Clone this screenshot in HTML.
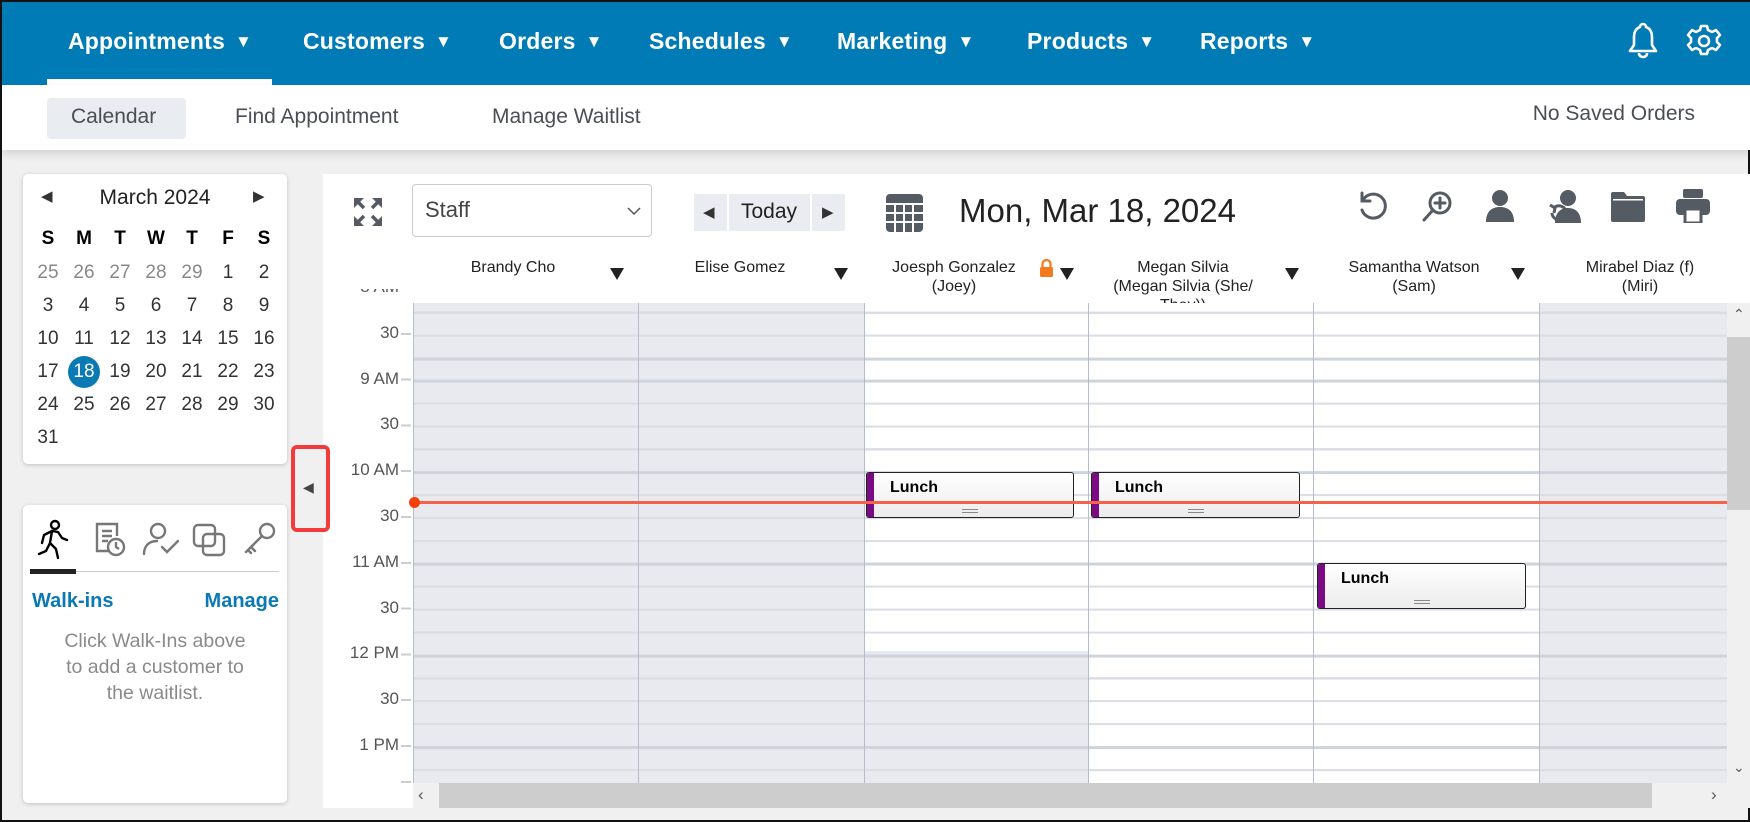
<!DOCTYPE html>
<html><head><meta charset="utf-8">
<style>
*{box-sizing:border-box;margin:0;padding:0}
body{width:1750px;height:822px;overflow:hidden;background:#f0f0f0;font-family:"Liberation Sans",Arial,sans-serif;position:relative;border:2px solid #111}
.a{position:absolute}
.nav{left:0;top:0;width:1750px;height:83px;background:#007bb5}
.ni{position:absolute;top:26px;color:#fff;font-size:23px;font-weight:bold;white-space:nowrap;letter-spacing:0.2px}
.ni span{font-size:17px;margin-left:10px;position:relative;top:-2px}
.sub{left:0;top:83px;width:1750px;height:65px;background:#fff;box-shadow:0 4px 8px rgba(0,0,0,.12)}
.st{position:absolute;top:20px;font-size:21px;color:#4a4e55;white-space:nowrap}
.card{background:#fff;border-radius:5px;box-shadow:0 1px 4px rgba(0,0,0,.2)}
.cal td{width:36px;height:33px;text-align:center;font-size:19px;color:#333}
.cal th{width:36px;height:34px;text-align:center;font-size:19px;color:#000;font-weight:bold}
.cal .g{color:#888}
.cal td.sel span{display:inline-block;width:32px;height:32px;border-radius:50%;background:#0a7ab5;color:#fff;line-height:32px}
.hdr{position:absolute;top:256px;font-size:16px;color:#222;text-align:center;line-height:19px;width:220px}
.tri{position:absolute;top:266px;width:0;height:0;border-left:7px solid transparent;border-right:7px solid transparent;border-top:12px solid #222}
.tl{position:absolute;font-size:17px;color:#555;text-align:right;width:76px}
.lunch{position:absolute;height:46px;border:1px solid #222;border-radius:3px;background:linear-gradient(#fff,#ececec);overflow:hidden}
.lunch:before{content:"";position:absolute;left:0;top:0;bottom:0;width:7px;background:#7b0a85}
.lunch b{position:absolute;left:23px;top:6px;font-size:16px;color:#000}
.lunch i{position:absolute;left:50%;bottom:4px;width:16px;margin-left:-8px;height:4px;border-top:1px solid #888;border-bottom:1px solid #888}
</style></head><body>
<div class="a nav">
<div class="ni" style="left:66px">Appointments<span>▼</span></div>
<div class="ni" style="left:301px">Customers<span>▼</span></div>
<div class="ni" style="left:497px">Orders<span>▼</span></div>
<div class="ni" style="left:647px">Schedules<span>▼</span></div>
<div class="ni" style="left:835px">Marketing<span>▼</span></div>
<div class="ni" style="left:1025px">Products<span>▼</span></div>
<div class="ni" style="left:1198px">Reports<span>▼</span></div>
<div class="a" style="left:45px;top:77px;width:225px;height:6px;background:#fff"></div>
<svg class="a" style="left:1624px;top:19px" width="34" height="40" viewBox="0 0 34 40" fill="none" stroke="#fff" stroke-width="2.6" stroke-linejoin="round"><path d="M17 3c-2 0-3 1.5-3 3C9 8 8 12 8 17v7l-4 6h26l-4-6v-7c0-5-1-9-6-11 0-1.5-1-3-3-3z"/><path d="M13 32c0 3 2 4 4 4s4-1 4-4"/></svg>
<svg class="a" style="left:1684px;top:21px" width="36" height="36" viewBox="0 0 36 36" fill="none" stroke="#fff" stroke-width="2.6" stroke-linejoin="round"><path d="M15 3h6l1 4 4 2 4-2 4 5-3 3v4l3 3-4 5-4-2-4 2-1 4h-6l-1-4-4-2-4 2-4-5 3-3v-4l-3-3 4-5 4 2 4-2z"/><circle cx="18" cy="18" r="5"/></svg>
</div>
<div class="a sub">
<div class="a" style="left:45px;top:13px;width:139px;height:41px;background:#e9ecf0;border-radius:4px"></div>
<div class="st" style="left:69px">Calendar</div>
<div class="st" style="left:233px">Find Appointment</div>
<div class="st" style="left:490px">Manage Waitlist</div>
<div class="st" style="right:57px;top:17px">No Saved Orders</div>
</div>

<div class="a card" style="left:21px;top:172px;width:264px;height:290px">
<div class="a" style="left:18px;top:13px;font-size:15px;color:#333">◀</div>
<div class="a" style="left:0;width:264px;top:12px;text-align:center;font-size:21px;color:#222">March 2024</div>
<div class="a" style="left:230px;top:13px;font-size:15px;color:#333">▶</div>
<table class="a cal" style="left:7px;top:48px;border-collapse:collapse">
<tr><th>S</th><th>M</th><th>T</th><th>W</th><th>T</th><th>F</th><th>S</th></tr>
<tr><td class="g">25</td><td class="g">26</td><td class="g">27</td><td class="g">28</td><td class="g">29</td><td>1</td><td>2</td></tr>
<tr><td>3</td><td>4</td><td>5</td><td>6</td><td>7</td><td>8</td><td>9</td></tr>
<tr><td>10</td><td>11</td><td>12</td><td>13</td><td>14</td><td>15</td><td>16</td></tr>
<tr><td>17</td><td class="sel"><span>18</span></td><td>19</td><td>20</td><td>21</td><td>22</td><td>23</td></tr>
<tr><td>24</td><td>25</td><td>26</td><td>27</td><td>28</td><td>29</td><td>30</td></tr>
<tr><td>31</td><td></td><td></td><td></td><td></td><td></td><td></td></tr>
</table>
</div>

<div class="a card" style="left:21px;top:503px;width:264px;height:298px">
<svg class="a" style="left:13px;top:14px" width="36" height="40" viewBox="0 0 36 40" fill="none" stroke="#000" stroke-width="2.4" stroke-linejoin="round" stroke-linecap="round"><circle cx="19" cy="6" r="4"/><path d="M16 12l-8 4-2 8M16 12l6 1 4 6 5 2M16 12l-2 12 6 6 2 9M14 24l-4 8-7 3"/></svg>
<svg class="a" style="left:70px;top:16px" width="36" height="38" viewBox="0 0 36 38" fill="none" stroke="#777" stroke-width="2.4"><path d="M17 30H4V3h20v12"/><path d="M9 10h10M9 15h10M9 20h6"/><circle cx="23" cy="26" r="8"/><path d="M23 21v5l3 2"/></svg>
<svg class="a" style="left:118px;top:16px" width="42" height="36" viewBox="0 0 42 36" fill="none" stroke="#777" stroke-width="2.4" stroke-linecap="round"><circle cx="17" cy="10" r="7"/><path d="M3 33c0-8 5-13 13-13"/><path d="M21 26l5 5 11-11"/></svg>
<svg class="a" style="left:168px;top:17px" width="36" height="36" viewBox="0 0 36 36" fill="none" stroke="#777" stroke-width="2.4"><rect x="3" y="3" width="21" height="21" rx="4"/><rect x="12" y="12" width="21" height="21" rx="4"/></svg>
<svg class="a" style="left:219px;top:16px" width="36" height="36" viewBox="0 0 36 36" fill="none" stroke="#777" stroke-width="2.4" stroke-linecap="round"><circle cx="25" cy="10" r="7"/><path d="M20 15L4 31M9 26l4 4M6 29l3 3"/></svg>
<div class="a" style="left:7px;top:66px;width:249px;height:1px;background:#ccc"></div>
<div class="a" style="left:7px;top:64px;width:46px;height:5px;background:#222"></div>
<div class="a" style="left:9px;top:85px;font-size:20px;font-weight:bold;color:#0a7ab5">Walk-ins</div>
<div class="a" style="right:8px;top:85px;font-size:20px;font-weight:bold;color:#0a7ab5">Manage</div>
<div class="a" style="left:0;width:264px;top:123px;text-align:center;font-size:19.5px;color:#8a8a8a;line-height:26px">Click Walk-Ins above<br>to add a customer to<br>the waitlist.</div>
</div>

<div class="a" style="left:321px;top:172px;width:1429px;height:634px;background:#fff"></div>
<svg class="a" style="left:352px;top:196px" width="28" height="28" viewBox="0 0 28 28" fill="#555b63"><path d="M0 0h10L0 10zM28 0H18l10 10zM0 28h10L0 18zM28 28H18l10-10z"/><path d="M4 4l6 6M24 4l-6 6M4 24l6-6M24 24l-6-6" stroke="#555b63" stroke-width="3.5"/></svg>
<div class="a" style="left:410px;top:182px;width:240px;height:53px;border:1px solid #ccc;border-radius:4px"></div>
<div class="a" style="left:423px;top:195px;font-size:22px;color:#444">Staff</div>
<svg class="a" style="left:624px;top:204px" width="16" height="10" viewBox="0 0 16 10" fill="none" stroke="#555" stroke-width="1.5"><path d="M2 2l6 6 6-6"/></svg>
<div class="a" style="left:692px;top:192px;width:33px;height:37px;background:#e9ecf0"></div>
<div class="a" style="left:727px;top:192px;width:81px;height:37px;background:#e9ecf0"></div>
<div class="a" style="left:810px;top:192px;width:33px;height:37px;background:#e9ecf0"></div>
<div class="a" style="left:701px;top:201px;font-size:15px;color:#333">◀</div>
<div class="a" style="left:739px;top:198px;font-size:21px;color:#222">Today</div>
<div class="a" style="left:820px;top:201px;font-size:15px;color:#333">▶</div>
<svg class="a" style="left:884px;top:192px" width="37" height="38" viewBox="0 0 37 38"><rect x="0" y="0" width="37" height="38" rx="4" fill="#555b63"/><g fill="#fff"><rect x="0" y="9" width="37" height="2"/><rect x="8" y="9" width="2" height="29"/><rect x="17" y="9" width="2" height="29"/><rect x="26" y="9" width="2" height="29"/><rect x="0" y="18" width="37" height="2"/><rect x="0" y="27" width="37" height="2"/></g></svg>
<div class="a" style="left:957px;top:190px;font-size:33px;color:#222">Mon, Mar 18, 2024</div>
<svg class="a" style="left:1355px;top:188px" width="32" height="32" viewBox="0 0 32 32" fill="none" stroke="#555b63" stroke-width="3" stroke-linecap="round"><path d="M6 10A12 12 0 1 1 5 20"/><path d="M5 3v8h8"/></svg>
<svg class="a" style="left:1419px;top:188px" width="32" height="34" viewBox="0 0 32 34" fill="none" stroke="#555b63" stroke-width="3" stroke-linecap="round"><circle cx="19" cy="13" r="10"/><path d="M12 20L3 30M19 8v10M14 13h10"/></svg>
<svg class="a" style="left:1484px;top:187px" width="28" height="33" viewBox="0 0 28 33" fill="#555b63"><circle cx="14" cy="9" r="8"/><path d="M0 33c0-10 5-15 14-15s14 5 14 15z"/></svg>
<svg class="a" style="left:1545px;top:187px" width="34" height="34" viewBox="0 0 34 34"><circle cx="21" cy="9" r="8" fill="#555b63"/><path d="M8 34c0-10 5-15 13-15s13 5 13 15z" fill="#555b63"/><path d="M5 24a7 7 0 1 0 3-6" fill="none" stroke="#555b63" stroke-width="3"/><path d="M3 16l5 3-1 5" fill="none" stroke="#555b63" stroke-width="3"/></svg>
<svg class="a" style="left:1609px;top:190px" width="34" height="30" viewBox="0 0 34 30" fill="#555b63"><path d="M2 0h11l3 4h16a2 2 0 0 1 2 2v22a2 2 0 0 1-2 2H2a2 2 0 0 1-2-2V2a2 2 0 0 1 2-2z"/><rect x="2" y="7" width="30" height="1.5" fill="#fff"/></svg>
<svg class="a" style="left:1674px;top:187px" width="34" height="34" viewBox="0 0 34 34" fill="#555b63"><rect x="7" y="0" width="20" height="9" rx="2"/><rect x="0" y="10" width="34" height="16" rx="4"/><rect x="9" y="20" width="16" height="14" fill="#fff" stroke="#555b63" stroke-width="3"/></svg>

<div class="hdr" style="left:401px">Brandy Cho</div>
<div class="hdr" style="left:628px">Elise Gomez</div>
<div class="hdr" style="left:842px">Joesph Gonzalez<br>(Joey)</div>
<div class="hdr" style="left:1071px;height:45px;overflow:hidden">Megan Silvia<br>(Megan Silvia (She/<br>They))</div>
<div class="hdr" style="left:1302px">Samantha Watson<br>(Sam)</div>
<div class="hdr" style="left:1528px">Mirabel Diaz (f)<br>(Miri)</div>
<div class="tri" style="left:608px"></div><div class="tri" style="left:832px"></div><div class="tri" style="left:1058px"></div><div class="tri" style="left:1283px"></div><div class="tri" style="left:1509px"></div>
<svg class="a" style="left:1037px;top:257px" width="15" height="18" viewBox="0 0 15 18"><path d="M3.5 8V5a4 4 0 0 1 8 0v3" fill="none" stroke="#f47a20" stroke-width="2.2"/><rect x="1" y="8" width="13" height="10" rx="1.5" fill="#f47a20"/></svg>

<div class="a" style="left:321px;top:287px;width:90px;height:494px;overflow:hidden">
<div class="tl" style="left:0;top:-12px">8 AM</div>
<div class="tl" style="left:0;top:34px">30</div>
<div class="tl" style="left:0;top:80px">9 AM</div>
<div class="tl" style="left:0;top:125px">30</div>
<div class="tl" style="left:0;top:171px">10 AM</div>
<div class="tl" style="left:0;top:217px">30</div>
<div class="tl" style="left:0;top:263px">11 AM</div>
<div class="tl" style="left:0;top:309px">30</div>
<div class="tl" style="left:0;top:354px">12 PM</div>
<div class="tl" style="left:0;top:400px">30</div>
<div class="tl" style="left:0;top:446px">1 PM</div>
<div class="a" style="left:78px;top:0;width:10px;height:494px;background:repeating-linear-gradient(to bottom,#ccc 0 2px,transparent 2px 45.8px);background-position:0 -2px"></div>
</div>

<div class="a" style="left:411px;top:301px;width:1314px;height:480px;overflow:hidden;background:#fff">
<div class="a" style="left:0;top:0;width:451px;height:480px;background:#e8eaef"></div>
<div class="a" style="left:451px;top:348px;width:224px;height:132px;background:#e8eaef"></div>
<div class="a" style="left:1126px;top:0;width:188px;height:480px;background:#e8eaef"></div>
<div class="a" style="left:0;top:0;width:1314px;height:480px;background:repeating-linear-gradient(to bottom,#cfd3db 0 3px,transparent 3px 22.9px,#dadde3 22.9px 25px,transparent 25px 45.8px,#dadde3 45.8px 47.9px,transparent 47.9px 68.7px,#dadde3 68.7px 70.8px,transparent 70.8px 91.6px);background-position:0 76.6px"></div>
<div class="a" style="left:0;top:0;width:1px;height:480px;background:#b5bccb"></div>
<div class="a" style="left:225px;top:0;width:1px;height:480px;background:#b5bccb"></div>
<div class="a" style="left:451px;top:0;width:1px;height:480px;background:#b5bccb"></div>
<div class="a" style="left:675px;top:0;width:1px;height:480px;background:#b5bccb"></div>
<div class="a" style="left:900px;top:0;width:1px;height:480px;background:#b5bccb"></div>
<div class="a" style="left:1126px;top:0;width:1px;height:480px;background:#b5bccb"></div>
</div>
<div class="lunch" style="left:864px;top:470px;width:208px"><b>Lunch</b><i></i></div>
<div class="lunch" style="left:1089px;top:470px;width:209px"><b>Lunch</b><i></i></div>
<div class="lunch" style="left:1315px;top:561px;width:209px"><b>Lunch</b><i></i></div>
<div class="a" style="left:412px;top:499px;width:1313px;height:3px;background:#f4624a"></div>
<div class="a" style="left:407px;top:495px;width:11px;height:11px;border-radius:50%;background:#f4400f"></div>

<div class="a" style="left:289px;top:443px;width:39px;height:87px;border:4px solid #f23c3c;border-radius:6px;background:#f0f0f0"></div>
<div class="a" style="left:301px;top:477px;font-size:14px;color:#444">◀</div>

<div class="a" style="left:1725px;top:301px;width:25px;height:480px;background:#f0f0f0"></div>
<div class="a" style="left:1725px;top:335px;width:25px;height:173px;background:#cdcdcd"></div>
<div class="a" style="left:1731px;top:304px;font-size:14px;color:#555">⌃</div>
<div class="a" style="left:1731px;top:757px;font-size:14px;color:#555">⌄</div>
<div class="a" style="left:411px;top:781px;width:1339px;height:25px;background:#f0f0f0"></div>
<div class="a" style="left:437px;top:781px;width:1213px;height:25px;background:#cdcdcd"></div>
<div class="a" style="left:416px;top:783px;font-size:17px;color:#555">‹</div>
<div class="a" style="left:1709px;top:783px;font-size:17px;color:#555">›</div>
</body></html>
